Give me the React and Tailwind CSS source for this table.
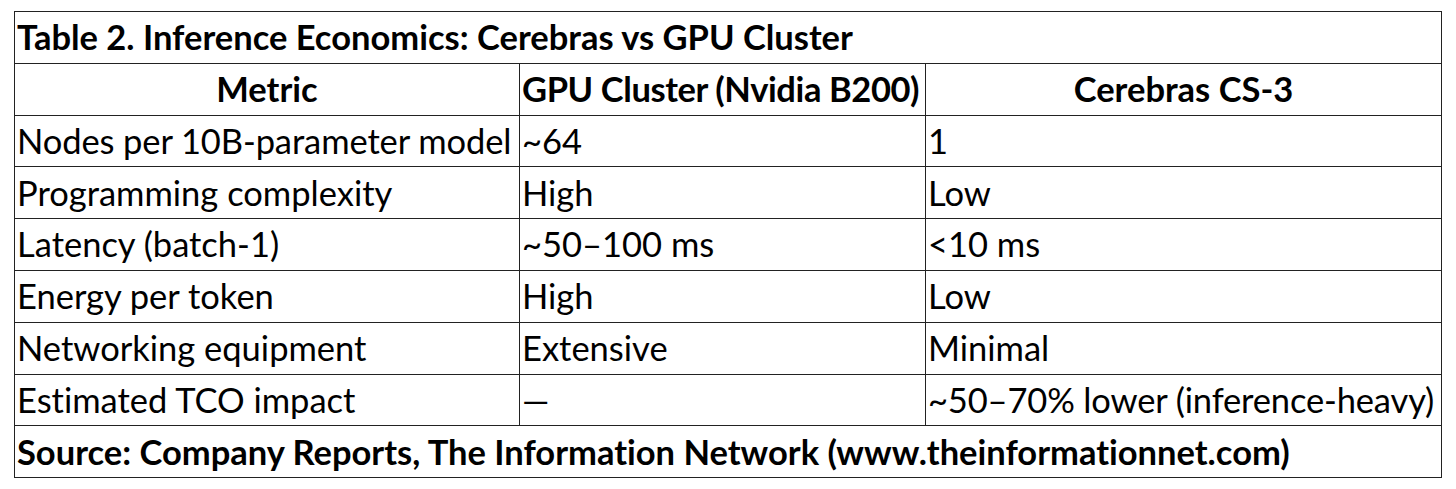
import React from "react";

const rows = [
  ["Nodes per 10B-parameter model", "~64", "1"],
  ["Programming complexity", "High", "Low"],
  ["Latency (batch-1)", "~50–100 ms", "<10 ms"],
  ["Energy per token", "High", "Low"],
  ["Networking equipment", "Extensive", "Minimal"],
  ["Estimated TCO impact", "—", "~50–70% lower (inference-heavy)"],
];

const cell = "border border-[#222] px-[2px] py-0 leading-none align-middle whitespace-nowrap overflow-visible";

export default function App() {
  return (
    <div className="bg-white w-[1456px] h-[489px] pt-[11px] pl-[14px] text-black font-['Lato',sans-serif] [font-variant-ligatures:none]">
      <table className="border-collapse table-fixed w-[1427px] border-[1.5px] border-[#222] text-[34.5px]">
        <colgroup>
          <col className="w-[505px]" />
          <col className="w-[406px]" />
          <col className="w-[516px]" />
        </colgroup>
        <tbody>
          <tr className="h-[51.8px]">
            <td colSpan={3} className={cell + " font-bold"}>
              Table 2. Inference Economics: Cerebras vs GPU Cluster
            </td>
          </tr>
          <tr className="h-[51.8px] font-bold">
            <td className={cell + " text-center"}>Metric</td>
            <td className={cell + " text-left tracking-[-0.4px]"}>GPU Cluster (Nvidia B200)</td>
            <td className={cell + " text-center"}>Cerebras CS-3</td>
          </tr>
          {rows.map((r, i) => (
            <tr key={i} className="h-[51.8px]">
              <td className={cell + (i === 0 ? " tracking-[-0.1px]" : "")}>{r[0]}</td>
              <td className={cell}>{r[1]}</td>
              <td className={cell + (i === 5 ? " tracking-[-0.15px]" : "")}>{r[2]}</td>
            </tr>
          ))}
          <tr className="h-[51.8px]">
            <td colSpan={3} className={cell + " font-bold"}>
              Source: Company Reports, The Information Network (www.theinformationnet.com)
            </td>
          </tr>
        </tbody>
      </table>
    </div>
  );
}
